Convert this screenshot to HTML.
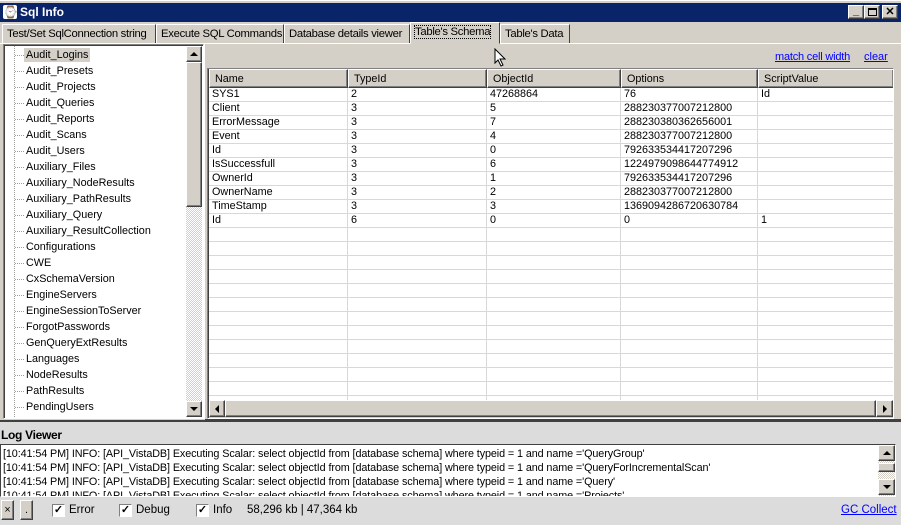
<!DOCTYPE html>
<html><head><style>
*{margin:0;padding:0;box-sizing:border-box}
body{width:901px;height:525px;background:#d4d0c8;font-family:"Liberation Sans",sans-serif;font-size:10.8px;color:#000;position:relative;overflow:hidden}
.a{position:absolute}
.t{white-space:nowrap}
.btn{position:absolute;background:#d4d0c8;border:1px solid;border-color:#fff #404040 #404040 #fff;box-shadow:inset -1px -1px 0 #808080}
.tab{position:absolute;top:24px;height:20px;border:1px solid;border-color:#fff #404040 transparent #fff;padding:3px 0 0 4px;font-size:11.3px;letter-spacing:-0.3px;white-space:nowrap;overflow:hidden}
.cell{position:absolute;height:14px;border-right:1px solid #d8d8d8;border-bottom:1px solid #d8d8d8;padding-left:3px;line-height:13px;background:#fff}
.hd{position:absolute;top:0;height:19px;border:1px solid;border-color:#fff #404040 #404040 #fff;box-shadow:inset -1px -1px 0 #808080;padding:3px 0 0 5px;background:#d4d0c8}
.tri{width:0;height:0;position:absolute}
</style></head><body>
<div class="a" style="left:0;top:0;width:901px;height:3px;background:#d4d0c8;border-top:1px solid #fff"></div>
<div class="a" style="left:0;top:3px;width:901px;height:19px;background:#0a246a"></div>
<div class="a" style="left:3px;top:5px;width:14px;height:14px;background:#fff;border-radius:2px;color:#0a246a;font-size:12px;line-height:14px;text-align:center">⌚</div>
<div class="a t" style="left:20px;top:5px;color:#fff;font-weight:bold;font-size:12px">Sql Info</div>
<div class="btn" style="left:848px;top:5px;width:16px;height:14px;font-weight:bold;font-size:11px;line-height:10px;text-align:center">_</div>
<div class="btn" style="left:864px;top:5px;width:16px;height:14px"><div class="a" style="left:3px;top:2px;width:9px;height:8px;border:1px solid #000;border-top-width:2px"></div></div>
<div class="btn" style="left:882px;top:5px;width:16px;height:14px;font-weight:bold;font-size:11px;line-height:12px;text-align:center">✕</div>

<div class="tab" style="left:2px;width:154px">Test/Set SqlConnection string</div>
<div class="tab" style="left:156px;width:128px">Execute SQL Commands</div>
<div class="tab" style="left:284px;width:126px">Database details viewer</div>
<div class="tab" style="left:410px;top:22px;height:22px;width:90px;background:#d4d0c8;padding-top:3px"><span style="outline:1px dotted #000">Table's Schema</span></div>
<div class="tab" style="left:500px;width:70px">Table's Data</div>
<div class="a" style="left:0;top:43px;width:410px;height:1px;background:#fff"></div>
<div class="a" style="left:500px;top:43px;width:401px;height:1px;background:#fff"></div>

<div class="a" style="left:3px;top:44px;width:201px;height:375px;background:#fff;border:1px solid;border-color:#808080 #fff #fff #808080;box-shadow:inset 1px 1px 0 #404040"></div>
<div class="a" style="left:5px;top:46px;width:181px;height:371px;overflow:hidden">
<div class="a" style="left:9px;top:0;width:0;height:371px;border-left:1px dotted #a0a0a0"></div>
<div id="tree"></div>
</div>
<div class="a" style="left:186px;top:46px;width:16px;height:371px;background:repeating-conic-gradient(#d4d0c8 0 25%,#fff 0 50%) 0 0/2px 2px"></div>
<div class="btn" style="left:186px;top:46px;width:16px;height:16px"><div class="tri" style="left:3px;top:5px;border:4px solid transparent;border-bottom:4px solid #000;border-top:0"></div></div>
<div class="btn" style="left:186px;top:62px;width:16px;height:145px"></div>
<div class="btn" style="left:186px;top:401px;width:16px;height:16px"><div class="tri" style="left:3px;top:5px;border:4px solid transparent;border-top:4px solid #000;border-bottom:0"></div></div>

<div class="a" style="left:204px;top:44px;width:697px;height:377px;border-left:1px solid #fff;border-bottom:2px solid #404040"></div>
<div class="a" style="left:0;top:420px;width:901px;height:2px;background:#404040"></div>
<div class="a t" style="left:775px;top:51px;color:#0000ff;text-decoration:underline;font-size:11px;letter-spacing:-0.2px">match cell width</div>
<div class="a t" style="left:864px;top:51px;color:#0000ff;text-decoration:underline;font-size:11px">clear</div>
<svg class="a" style="left:494px;top:48px" width="14" height="20"><path d="M1 1 L1 15 L4 12 L7 18 L9 17 L6 11 L11 11 Z" fill="#fff" stroke="#000"/></svg>

<div class="a" style="left:207px;top:68px;width:687px;height:351px;background:#d4d0c8;border:1px solid;border-color:#808080 #fff #fff #808080;box-shadow:inset 1px 1px 0 #404040"></div>
<div class="a" id="grid" style="left:209px;top:69px;width:684px;height:331px;overflow:hidden;background:#fff"></div>
<div class="a" style="left:209px;top:400px;width:684px;height:17px;background:repeating-conic-gradient(#d4d0c8 0 25%,#fff 0 50%) 0 0/2px 2px"></div>
<div class="btn" style="left:209px;top:400px;width:16px;height:17px"><div class="tri" style="left:5px;top:4px;border:4px solid transparent;border-right:4px solid #000;border-left:0"></div></div>
<div class="btn" style="left:225px;top:400px;width:651px;height:17px"></div>
<div class="btn" style="left:876px;top:400px;width:17px;height:17px"><div class="tri" style="left:6px;top:4px;border:4px solid transparent;border-left:4px solid #000;border-right:0"></div></div>

<div class="a" style="left:0;top:422px;width:901px;height:103px;background:#dcdcdc"></div>
<div class="a t" style="left:1px;top:428px;font-weight:bold;font-size:12px;letter-spacing:-0.3px">Log Viewer</div>
<div class="a" style="left:0;top:444px;width:896px;height:53px;background:#fff;border:1px solid;border-color:#404040 #fff #fff #404040;overflow:hidden">
<div class="a t" style="left:2px;top:2px;line-height:14px;font-size:10.8px;letter-spacing:-0.1px">[10:41:54 PM] INFO: [API_VistaDB] Executing Scalar: select objectId from [database schema] where typeid = 1 and name ='QueryGroup'<br>[10:41:54 PM] INFO: [API_VistaDB] Executing Scalar: select objectId from [database schema] where typeid = 1 and name ='QueryForIncrementalScan'<br>[10:41:54 PM] INFO: [API_VistaDB] Executing Scalar: select objectId from [database schema] where typeid = 1 and name ='Query'<br>[10:41:54 PM] INFO: [API_VistaDB] Executing Scalar: select objectId from [database schema] where typeid = 1 and name ='Projects'</div>
<div class="a" style="left:877px;top:0;width:17px;height:51px;background:repeating-conic-gradient(#d4d0c8 0 25%,#fff 0 50%) 0 0/2px 2px"></div>
<div class="btn" style="left:877px;top:0;width:17px;height:16px"><div class="tri" style="left:4px;top:5px;border:4px solid transparent;border-bottom:4px solid #000;border-top:0"></div></div>
<div class="btn" style="left:877px;top:18px;width:17px;height:9px"></div>
<div class="btn" style="left:877px;top:34px;width:17px;height:16px"><div class="tri" style="left:4px;top:5px;border:4px solid transparent;border-top:4px solid #000;border-bottom:0"></div></div>
</div>
<div class="btn" style="left:1px;top:500px;width:13px;height:20px;text-align:center;line-height:18px">×</div>
<div class="btn" style="left:20px;top:500px;width:13px;height:20px;text-align:center;line-height:18px">.</div>
<div class="a" style="left:52px;top:504px;width:13px;height:13px;background:#fff;border:1px solid;border-color:#808080 #fff #fff #808080;font-size:11px;line-height:10px;text-align:center;font-weight:bold">✓</div>
<div class="a t" style="left:69px;top:504px;font-size:11.5px">Error</div>
<div class="a" style="left:119px;top:504px;width:13px;height:13px;background:#fff;border:1px solid;border-color:#808080 #fff #fff #808080;font-size:11px;line-height:10px;text-align:center;font-weight:bold">✓</div>
<div class="a t" style="left:136px;top:504px;font-size:11.5px">Debug</div>
<div class="a" style="left:196px;top:504px;width:13px;height:13px;background:#fff;border:1px solid;border-color:#808080 #fff #fff #808080;font-size:11px;line-height:10px;text-align:center;font-weight:bold">✓</div>
<div class="a t" style="left:213px;top:504px;font-size:11.5px">Info</div>
<div class="a t" style="left:247px;top:504px;font-size:11.5px">58,296 kb | 47,364 kb</div>
<div class="a t" style="left:841px;top:504px;font-size:11.5px;color:#0000ff;text-decoration:underline">GC Collect</div>

<script>
var items=["Audit_Logins","Audit_Presets","Audit_Projects","Audit_Queries","Audit_Reports","Audit_Scans","Audit_Users","Auxiliary_Files","Auxiliary_NodeResults","Auxiliary_PathResults","Auxiliary_Query","Auxiliary_ResultCollection","Configurations","CWE","CxSchemaVersion","EngineServers","EngineSessionToServer","ForgotPasswords","GenQueryExtResults","Languages","NodeResults","PathResults","PendingUsers"];
var h="";items.forEach(function(s,i){var y=i*16;h+='<div class="a" style="left:10px;top:'+(y+9)+'px;width:9px;border-top:1px dotted #a0a0a0"></div><div class="a t" style="left:19px;top:'+(y+2)+'px;padding:0 2px;line-height:14px;font-size:10.8px;'+(i==0?'background:#d4d0c8':'')+'">'+s+'</div>';});
document.getElementById("tree").innerHTML=h;
var cols=[[0,139,"Name"],[139,139,"TypeId"],[278,134,"ObjectId"],[412,137,"Options"],[549,136,"ScriptValue"]];
var rows=[["SYS1","2","47268864","76","Id"],["Client","3","5","288230377007212800",""],["ErrorMessage","3","7","288230380362656001",""],["Event","3","4","288230377007212800",""],["Id","3","0","792633534417207296",""],["IsSuccessfull","3","6","1224979098644774912",""],["OwnerId","3","1","792633534417207296",""],["OwnerName","3","2","288230377007212800",""],["TimeStamp","3","3","1369094286720630784",""],["Id","6","0","0","1"]];
var g="";cols.forEach(function(c){g+='<div class="hd t" style="left:'+c[0]+'px;width:'+c[1]+'px">'+c[2]+'</div>';});
for(var r=0;r<23;r++){cols.forEach(function(c,j){var v=r<rows.length?rows[r][j]:"";g+='<div class="cell t" style="left:'+c[0]+'px;top:'+(19+r*14)+'px;width:'+c[1]+'px">'+v+'</div>';});}
document.getElementById("grid").innerHTML=g;
</script>
</body></html>
